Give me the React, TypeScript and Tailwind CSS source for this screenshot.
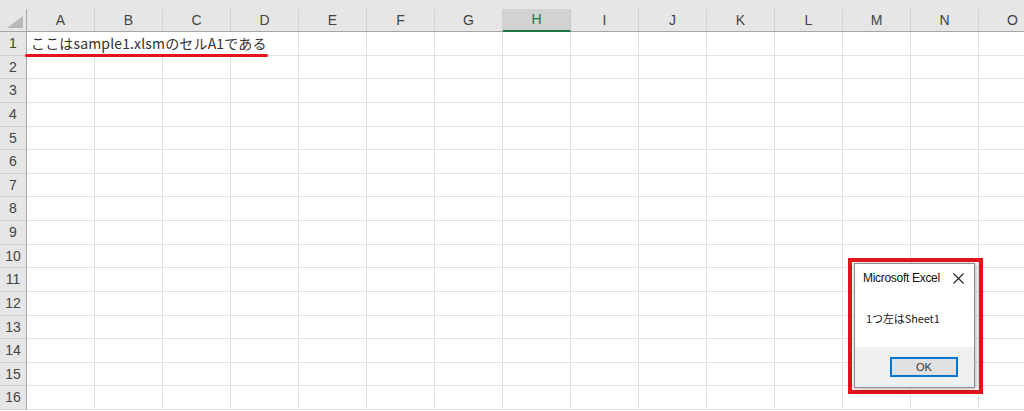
import React from "react";

const COLS = ["A", "B", "C", "D", "E", "F", "G", "H", "I", "J", "K", "L", "M", "N", "O"];
const ROW_HEIGHTS = [24, 23, 24, 24, 23, 24, 23, 24, 24, 23, 24, 24, 23, 24, 23, 24];

const uiFont = "font-['Liberation_Sans','Noto_Sans_CJK_JP',sans-serif]";

function ColumnHeader() {
  return (
    <div className="flex h-[32px] bg-[#e6e6e6] border-b border-[#a5a5a5]">
      {/* corner */}
      <div className="w-[27px] shrink-0 flex flex-col">
        <div className="h-[9px]" />
        <div className="flex-1 border-r border-[#a5a5a5] relative">
          <svg className="absolute left-[6px] top-[7px]" width="18" height="13" viewBox="0 0 18 13">
            <polygon points="1,12 17,12 17,0" fill="#b8b8b8" />
          </svg>
        </div>
      </div>
      {COLS.map((c) => {
        const active = c === "H";
        return (
          <div key={c} className="w-[68px] shrink-0 flex flex-col">
            <div className="h-[9px]" />
            <div
              className={
                active
                  ? "flex-1 flex items-center justify-center bg-[#d2d2d2] border-r border-[#c6c6c6] border-b-2 border-b-[#217346] text-[#217346] text-[14px] mb-[-1px]"
                  : "flex-1 flex items-center justify-center border-r border-[#d0d0d0] text-[#444] text-[14px]"
              }
            >
              {c}
            </div>
          </div>
        );
      })}
    </div>
  );
}

function Row({ n, h }: { n: number; h: number }) {
  return (
    <div className="flex" style={{ height: h }}>
      <div className="w-[27px] shrink-0 bg-[#e6e6e6] border-r border-[#a5a5a5] border-b border-b-[#d0d0d0] flex items-center justify-center text-[14px] text-[#444]">
        {n}
      </div>
      {n === 1 ? (
        <>
          <div className="w-[272px] shrink-0 border-r border-b border-[#e1e1e1] flex items-center pl-[4px] text-[14px] text-[#333] whitespace-nowrap font-['Noto_Sans_CJK_JP',sans-serif] tracking-[0.15px]">
            ここはsample1.xlsmのセルA1である
          </div>
          {COLS.slice(4).map((c) => (
            <div key={c} className="w-[68px] shrink-0 border-r border-b border-[#e1e1e1]" />
          ))}
        </>
      ) : (
        COLS.map((c) => <div key={c} className="w-[68px] shrink-0 border-r border-b border-[#e1e1e1]" />)
      )}
    </div>
  );
}

function MessageBox() {
  return (
    <div className="absolute left-[848px] top-[258px] w-[135px] h-[136px] border-[4px] border-[#e5141c] pl-[2px] pt-px">
      <div className="w-[121px] h-[125px] border border-[#8c8c8c] bg-white shadow-[1px_1px_5px_rgba(0,0,0,0.3)] flex flex-col">
        <div className="h-[28px] flex items-center justify-between pl-[8px] pr-[10px]">
          <span className="text-[12px] text-[#111] tracking-[-0.3px]">Microsoft Excel</span>
          <svg width="11" height="11" viewBox="0 0 11 11">
            <path d="M0.5 0.5 L10.5 10.5 M10.5 0.5 L0.5 10.5" stroke="#222" strokeWidth="1.1" />
          </svg>
        </div>
        <div className="flex-1 flex items-center pl-[11px] pb-[2px]">
          <span className="text-[11px] text-[#222] font-['Noto_Sans_CJK_JP',sans-serif] tracking-[-0.1px]">1つ左はSheet1</span>
        </div>
        <div className="h-[40px] bg-[#f0f0f0] flex items-center justify-end pr-[16px]">
          <div className="w-[68px] h-[20px] border-2 border-[#0078d7] bg-[#e1e1e1] flex items-center justify-center text-[11px] text-[#333]">
            OK
          </div>
        </div>
      </div>
    </div>
  );
}

export default function App() {
  return (
    <div className={`relative w-[1024px] h-[411px] overflow-hidden bg-white ${uiFont}`}>
      <ColumnHeader />
      {ROW_HEIGHTS.map((h, i) => (
        <Row key={i} n={i + 1} h={h} />
      ))}
      {/* red annotation under A1 */}
      <div className="absolute left-[25px] top-[54px] w-[243px] h-[3px] rounded-full bg-[#e5141c]" />
      <MessageBox />
    </div>
  );
}
